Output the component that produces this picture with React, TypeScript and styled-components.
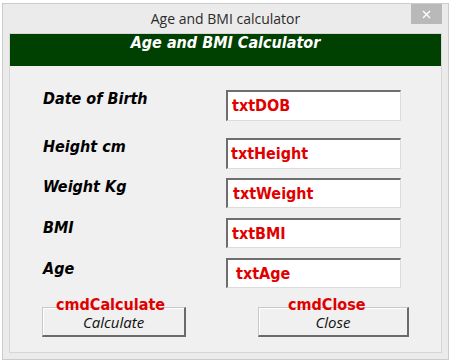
import React from "react";
import styled, { createGlobalStyle } from "styled-components";

const GlobalStyle = createGlobalStyle`
  html, body { margin: 0; padding: 0; background: #ffffff; }
  * { box-sizing: border-box; }
`;

const FORM_FONT = `"DejaVu Sans Condensed", "DejaVu Sans", Verdana, sans-serif`;
const UI_FONT = `"Open Sans", "Noto Sans", sans-serif`;

const Page = styled.div`
  padding: 3px 0 0 2px;
`;

const Window = styled.div`
  width: 447px;
  border: 1px solid #cbcbcb;
  background: #ebebeb;
  padding: 0 6px 6px 6px;
  display: flex;
  flex-direction: column;
`;

const TitleBar = styled.div`
  display: grid;
  grid-template-columns: 1fr auto 1fr;
  height: 29px;
  align-items: start;
`;

const Title = styled.div`
  grid-column: 2;
  font-family: ${UI_FONT};
  font-size: 14px;
  line-height: 29px;
  color: #2b2b2b;
  white-space: nowrap;
`;

const CloseBox = styled.div`
  grid-column: 3;
  justify-self: end;
  width: 31px;
  height: 20px;
  background: #b9b9b9;
  display: flex;
  align-items: center;
  justify-content: center;
`;

const Client = styled.div`
  background: #f0f0f0;
  border: 1px solid #d6d6d6;
  display: flex;
  flex-direction: column;
`;

const Header = styled.div`
  height: 32px;
  background: #004000;
  color: #ffffff;
  font-family: ${FORM_FONT};
  font-stretch: condensed;
  font-weight: bold;
  font-style: italic;
  font-size: 16px;
  line-height: 16px;
  padding-top: 1px;
  text-align: center;
  white-space: nowrap;
`;

const Form = styled.div`
  display: flex;
  flex-direction: column;
  padding: 24px 0 15px 33px;
`;

const Row = styled.div<{ $top: number }>`
  display: flex;
  align-items: flex-start;
  margin-top: ${(p) => p.$top}px;
`;

const FieldLabel = styled.div<{ $drop: number }>`
  width: 183px;
  padding-top: ${(p) => p.$drop}px;
  font-family: ${FORM_FONT};
  font-stretch: condensed;
  font-weight: bold;
  font-style: italic;
  font-size: 16px;
  line-height: 16px;
  color: #000000;
  white-space: nowrap;
`;

const TextBox = styled.div<{ $h: number; $indent: number }>`
  width: 175px;
  height: ${(p) => p.$h}px;
  background: #ffffff;
  border-top: 2px solid #6e6e6e;
  border-left: 2px solid #6e6e6e;
  border-right: 1px solid #dcdcdc;
  border-bottom: 1px solid #dcdcdc;
  display: flex;
  align-items: center;
  padding-left: ${(p) => p.$indent}px;
  font-family: ${FORM_FONT};
  font-stretch: condensed;
  font-weight: bold;
  font-size: 16px;
  line-height: 16px;
  color: #e00000;
  white-space: nowrap;
`;

const ButtonRow = styled.div`
  display: flex;
  margin-top: 19px;
  margin-left: -1px;
  gap: 72px;
`;

const ButtonWrap = styled.div`
  position: relative;
`;

const Button = styled.div<{ $w: number }>`
  width: ${(p) => p.$w}px;
  height: 30px;
  background: #f0f0f0;
  border-top: 1px solid #c8c8c8;
  border-left: 1px solid #c8c8c8;
  border-right: 2px solid #6a6a6a;
  border-bottom: 2px solid #6a6a6a;
  box-shadow: inset 1px 1px 0 #ffffff;
  display: flex;
  align-items: center;
  justify-content: center;
  padding-top: 2px;
  font-family: ${UI_FONT};
  font-style: italic;
  font-size: 15px;
  line-height: 15px;
  color: #111111;
`;

const Caption = styled.div<{ $left: number }>`
  position: absolute;
  left: ${(p) => p.$left}px;
  top: -10px;
  font-family: ${FORM_FONT};
  font-stretch: condensed;
  font-weight: bold;
  font-size: 16px;
  line-height: 15px;
  color: #e00000;
  white-space: nowrap;
`;

const fields = [
  { label: "Date of Birth", box: "txtDOB", top: 0, h: 31, indent: 4, drop: 1 },
  { label: "Height cm", box: "txtHeight", top: 17, h: 31, indent: 3, drop: 1 },
  { label: "Weight Kg", box: "txtWeight", top: 9, h: 30, indent: 5, drop: 1 },
  { label: "BMI", box: "txtBMI", top: 10, h: 30, indent: 4, drop: 2 },
  { label: "Age", box: "txtAge", top: 10, h: 30, indent: 8, drop: 3 },
];

export default function App() {
  return (
    <>
      <GlobalStyle />
      <Page>
        <Window>
          <TitleBar>
            <Title>Age and BMI calculator</Title>
            <CloseBox>
              <svg width="9" height="9" viewBox="0 0 9 9">
                <path d="M1 1 L8 8 M8 1 L1 8" stroke="#ffffff" strokeWidth="1.4" />
              </svg>
            </CloseBox>
          </TitleBar>
          <Client>
            <Header>Age and BMI Calculator</Header>
            <Form>
              {fields.map((f) => (
                <Row key={f.box} $top={f.top}>
                  <FieldLabel $drop={f.drop}>{f.label}</FieldLabel>
                  <TextBox $h={f.h} $indent={f.indent}>
                    {f.box}
                  </TextBox>
                </Row>
              ))}
              <ButtonRow>
                <ButtonWrap>
                  <Button $w={144}>Calculate</Button>
                  <Caption $left={14}>cmdCalculate</Caption>
                </ButtonWrap>
                <ButtonWrap>
                  <Button $w={151}>Close</Button>
                  <Caption $left={30}>cmdClose</Caption>
                </ButtonWrap>
              </ButtonRow>
            </Form>
          </Client>
        </Window>
      </Page>
    </>
  );
}
